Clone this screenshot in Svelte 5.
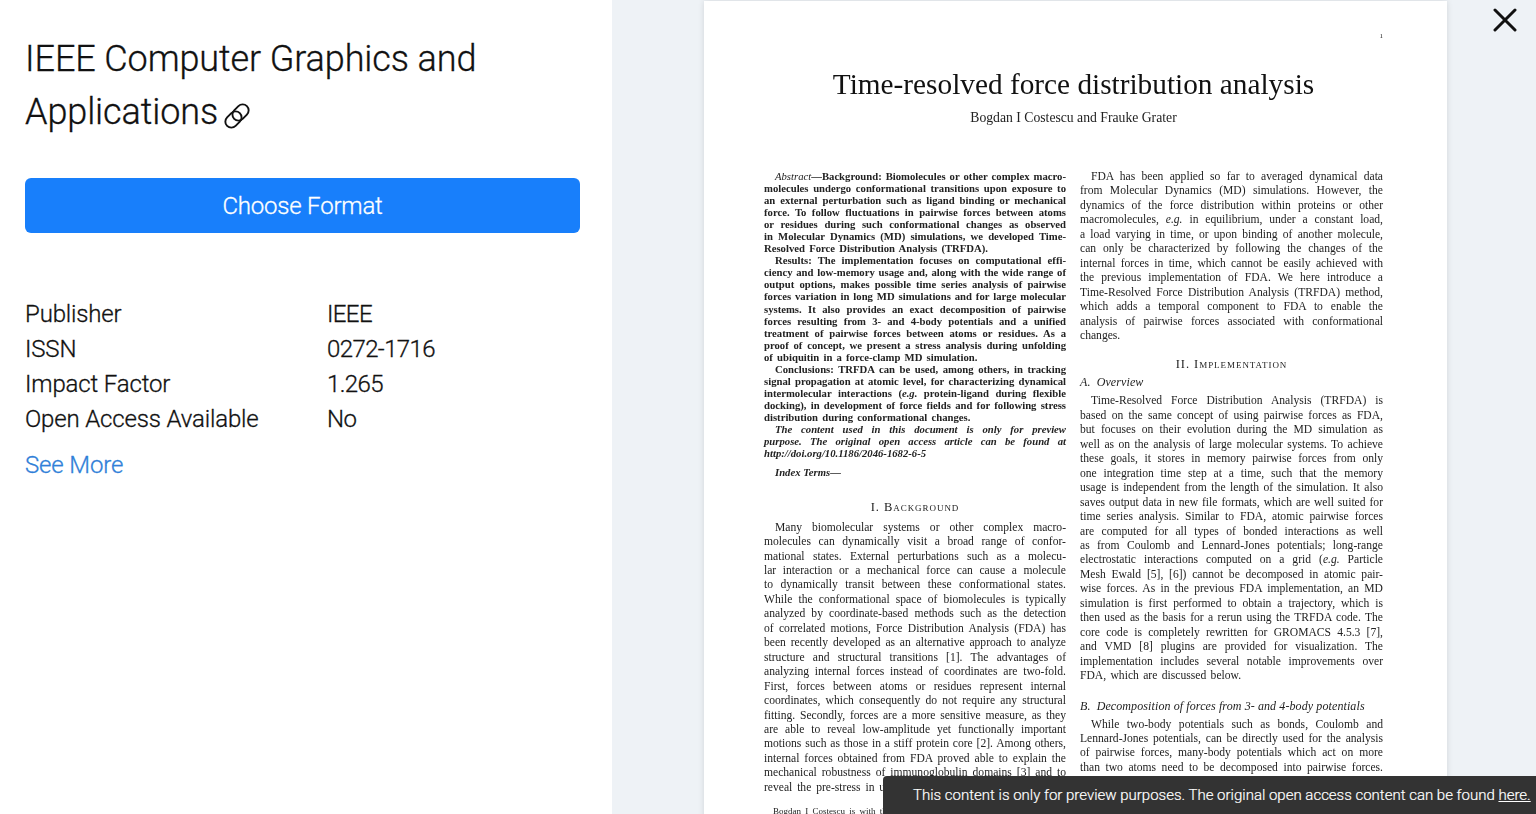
<script>
  const details = [
    ['Publisher', 'IEEE'],
    ['ISSN', '0272-1716'],
    ['Impact Factor', '1.265'],
    ['Open Access Available', 'No']
  ];

  // '>' marks an indented first line, '$' a paragraph's short last line
  const abstract = [
    '><i class="plain">Abstract</i>—Background: Biomolecules or other complex macro-',
    'molecules undergo conformational transitions upon exposure to',
    'an external perturbation such as ligand binding or mechanical',
    'force. To follow fluctuations in pairwise forces between atoms',
    'or residues during such conformational changes as observed',
    'in Molecular Dynamics (MD) simulations, we developed Time-',
    '$Resolved Force Distribution Analysis (TRFDA).',
    '>Results: The implementation focuses on computational effi-',
    'ciency and low-memory usage and, along with the wide range of',
    'output options, makes possible time series analysis of pairwise',
    'forces variation in long MD simulations and for large molecular',
    'systems. It also provides an exact decomposition of pairwise',
    'forces resulting from 3- and 4-body potentials and a unified',
    'treatment of pairwise forces between atoms or residues. As a',
    'proof of concept, we present a stress analysis during unfolding',
    '$of ubiquitin in a force-clamp MD simulation.',
    '>Conclusions: TRFDA can be used, among others, in tracking',
    'signal propagation at atomic level, for characterizing dynamical',
    'intermolecular interactions (<i>e.g.</i> protein-ligand during flexible',
    'docking), in development of force fields and for following stress',
    '$distribution during conformational changes.',
    '><i>The content used in this document is only for preview</i>',
    '<i>purpose. The original open access article can be found at</i>',
    '$<i>http://doi.org/10.1186/2046-1682-6-5</i>'
  ];

  const background = [
    '>Many biomolecular systems or other complex macro-',
    'molecules can dynamically visit a broad range of confor-',
    'mational states. External perturbations such as a molecu-',
    'lar interaction or a mechanical force can cause a molecule',
    'to dynamically transit between these conformational states.',
    'While the conformational space of biomolecules is typically',
    'analyzed by coordinate-based methods such as the detection',
    'of correlated motions, Force Distribution Analysis (FDA) has',
    'been recently developed as an alternative approach to analyze',
    'structure and structural transitions [1]. The advantages of',
    'analyzing internal forces instead of coordinates are two-fold.',
    'First, forces between atoms or residues represent internal',
    'coordinates, which consequently do not require any structural',
    'fitting. Secondly, forces are a more sensitive measure, as they',
    'are able to reveal low-amplitude yet functionally important',
    'motions such as those in a stiff protein core [2]. Among others,',
    'internal forces obtained from FDA proved able to explain the',
    'mechanical robustness of immunoglobulin domains [3] and to',
    'reveal the pre-stress in ubiquitin under a mechanical load [4].'
  ];

  const intro = [
    '>FDA has been applied so far to averaged dynamical data',
    'from Molecular Dynamics (MD) simulations. However, the',
    'dynamics of the force distribution within proteins or other',
    'macromolecules, <i>e.g.</i> in equilibrium, under a constant load,',
    'a load varying in time, or upon binding of another molecule,',
    'can only be characterized by following the changes of the',
    'internal forces in time, which cannot be easily achieved with',
    'the previous implementation of FDA. We here introduce a',
    'Time-Resolved Force Distribution Analysis (TRFDA) method,',
    'which adds a temporal component to FDA to enable the',
    'analysis of pairwise forces associated with conformational',
    '$changes.'
  ];

  const overview = [
    '>Time-Resolved Force Distribution Analysis (TRFDA) is',
    'based on the same concept of using pairwise forces as FDA,',
    'but focuses on their evolution during the MD simulation as',
    'well as on the analysis of large molecular systems. To achieve',
    'these goals, it stores in memory pairwise forces from only',
    'one integration time step at a time, such that the memory',
    'usage is independent from the length of the simulation. It also',
    'saves output data in new file formats, which are well suited for',
    'time series analysis. Similar to FDA, atomic pairwise forces',
    'are computed for all types of bonded interactions as well',
    'as from Coulomb and Lennard-Jones potentials; long-range',
    'electrostatic interactions computed on a grid (<i>e.g.</i> Particle',
    'Mesh Ewald [5], [6]) cannot be decomposed in atomic pair-',
    'wise forces. As in the previous FDA implementation, an MD',
    'simulation is first performed to obtain a trajectory, which is',
    'then used as the basis for a rerun using the TRFDA code. The',
    'core code is completely rewritten for GROMACS 4.5.3 [7],',
    'and VMD [8] plugins are provided for visualization. The',
    'implementation includes several notable improvements over',
    '$FDA, which are discussed below.'
  ];

  const decomposition = [
    '>While two-body potentials such as bonds, Coulomb and',
    'Lennard-Jones potentials, can be directly used for the analysis',
    'of pairwise forces, many-body potentials which act on more',
    'than two atoms need to be decomposed into pairwise forces.'
  ];

  const lineClass = (l) => (l[0] === '>' ? 'line indent' : l[0] === '$' ? 'line last' : 'line');
  const lineText = (l) => (l[0] === '>' || l[0] === '$' ? l.slice(1) : l);
</script>

{#snippet para(lines)}
  {#each lines as l}
    <div class={lineClass(l)}>{@html lineText(l)}</div>
  {/each}
{/snippet}

<div class="layout">
  <aside class="info">
    <h1>
      IEEE Computer Graphics and Applications
      <svg class="link-icon" viewBox="0 0 26 26" fill="none" stroke="#111" stroke-width="1.9" aria-hidden="true">
        <rect x="4" y="7" width="18" height="12" rx="6" transform="rotate(-45 13 13) translate(5 0)" />
        <rect x="4" y="7" width="18" height="12" rx="6" transform="rotate(-45 13 13) translate(-5 0)" />
      </svg>
    </h1>
    <button class="choose">Choose Format</button>
    <dl class="details">
      {#each details as [label, value]}
        <dt>{label}</dt>
        <dd>{value}</dd>
      {/each}
    </dl>
    <a class="more" href="#more">See More</a>
  </aside>

  <main class="viewer">
    <article class="page">
      <div class="page-no">1</div>
      <h2>Time-resolved force distribution analysis</h2>
      <div class="authors">Bogdan I Costescu and Frauke Grater</div>
      <div class="columns">
        <section>
          <div class="abstract">{@render para(abstract)}</div>
          <div class="terms">Index Terms—</div>
          <h3 class="bg-head">I. Background</h3>
          <div class="body">{@render para(background)}</div>
          <div class="foot">Bogdan I Costescu is with the Heidelberg Institute</div>
        </section>
        <section>
          <div class="body">{@render para(intro)}</div>
          <h3 class="impl-head">II. Implementation</h3>
          <h4 class="sub-a"><span>A.</span> Overview</h4>
          <div class="body">{@render para(overview)}</div>
          <h4 class="sub-b"><span>B.</span> Decomposition of forces from 3- and 4-body potentials</h4>
          <div class="body">{@render para(decomposition)}</div>
        </section>
      </div>
    </article>
    <button class="close" aria-label="Close">
      <svg viewBox="0 0 24 24" width="24" height="24" fill="none" stroke="#111" stroke-width="3" stroke-linecap="round">
        <path d="M2 2 22 22M22 2 2 22" />
      </svg>
    </button>
  </main>

  <div class="toast">This content is only for preview purposes. The original open access content can be found <a href="#here">here.</a></div>
</div>

<style>
  :global(body) {
    margin: 0;
    background: #eef2f6;
  }

  .layout {
    display: flex;
    height: 814px;
    overflow: hidden;
    position: relative;
    font-family: Roboto, "Liberation Sans", sans-serif;
    font-weight: 300;
    color: #111;
  }

  .info {
    width: 612px;
    flex: none;
    box-sizing: border-box;
    padding: 33px 32px 0 25px;
    background: #fff;
    -webkit-text-stroke: 0.3px currentColor;
  }

  h1 {
    margin: 0;
    font-size: 36px;
    font-weight: 300;
    line-height: 53px;
    letter-spacing: -0.1px;
  }

  .link-icon {
    width: 26px;
    height: 26px;
    margin-left: -3px;
    vertical-align: -5px;
  }

  .choose {
    display: block;
    width: 555px;
    height: 55px;
    margin-top: 39px;
    border: 0;
    border-radius: 6px;
    background: #187ffb;
    color: #fff;
    font: 300 24px Roboto, sans-serif;
    letter-spacing: -0.2px;
  }

  .details {
    display: grid;
    grid-template-columns: 302px 1fr;
    grid-auto-rows: 35px;
    margin: 64px 0 0;
    font-size: 24px;
    line-height: 35px;
    letter-spacing: -0.15px;
  }

  dt, dd {
    margin: 0;
  }

  dd {
    letter-spacing: -0.6px;
  }

  .more {
    display: block;
    margin-top: 11px;
    font-size: 24px;
    line-height: 35px;
    letter-spacing: -0.15px;
    color: #2f80d8;
    text-decoration: none;
  }

  .viewer {
    flex: 1;
    position: relative;
    padding: 1px 0 0 92px;
    background: #eef2f6;
  }

  .page {
    width: 743px;
    height: 900px;
    box-sizing: border-box;
    padding: 0 64px 0 60px;
    background: #fff;
    box-shadow: 0 0 6px rgba(0, 0, 0, 0.12);
    font-family: "Liberation Serif", serif;
    font-weight: 400;
    color: #222;
    filter: blur(0.4px);
  }

  .page-no {
    padding-top: 31px;
    font-size: 7px;
    line-height: 8px;
    text-align: right;
  }

  h2 {
    margin: 24px 0 0;
    font-size: 29.3px;
    font-weight: 400;
    line-height: 40px;
    text-align: center;
    color: #111;
  }

  .authors {
    margin-top: 6px;
    font-size: 13.7px;
    line-height: 16px;
    text-align: center;
  }

  .columns {
    display: grid;
    grid-template-columns: 302px 303px;
    column-gap: 14px;
    margin-top: 44px;
  }

  .line {
    white-space: nowrap;
    text-align: justify;
    text-align-last: justify;
  }

  .line.indent {
    padding-left: 11px;
  }

  .line.last {
    text-align-last: left;
    word-spacing: 1.5px;
  }

  .abstract {
    font-size: 10.7px;
    font-weight: 700;
    line-height: 12.05px;
  }

  .abstract :global(.plain) {
    font-weight: 400;
  }

  .terms {
    margin-top: 7px;
    padding-left: 11px;
    font-size: 10.7px;
    font-weight: 700;
    font-style: italic;
    line-height: 12px;
  }

  .body {
    font-size: 11.6px;
    line-height: 14.45px;
  }

  h3 {
    margin: 0;
    font-size: 12.5px;
    font-weight: 400;
    line-height: 14px;
    letter-spacing: 0.95px;
    text-align: center;
    font-variant: small-caps;
  }

  .bg-head {
    margin-top: 22px;
    margin-bottom: 6.5px;
  }

  .impl-head {
    margin-top: 14px;
  }

  h4 {
    margin: 0;
    font-size: 12px;
    font-weight: 400;
    font-style: italic;
    line-height: 14px;
    letter-spacing: 0.1px;
  }

  h4 span {
    margin-right: 3px;
  }

  .sub-a {
    margin: 4px 0 5px;
  }

  .sub-b {
    margin: 15px 0 5px;
  }

  .foot {
    margin-top: 11px;
    padding-left: 9px;
    font-size: 9px;
    line-height: 10px;
    word-spacing: 2px;
  }

  .close {
    position: absolute;
    top: 8px;
    right: 19px;
    padding: 0;
    border: 0;
    background: none;
    line-height: 0;
  }

  .toast {
    position: absolute;
    left: 883px;
    right: 0;
    bottom: 0;
    height: 38px;
    box-sizing: border-box;
    padding-left: 30px;
    border-top-left-radius: 4px;
    background: #333;
    color: #fff;
    font-size: 15px;
    line-height: 38px;
    white-space: nowrap;
    -webkit-text-stroke: 0.2px currentColor;
  }

  .toast a {
    color: #fff;
  }
</style>
